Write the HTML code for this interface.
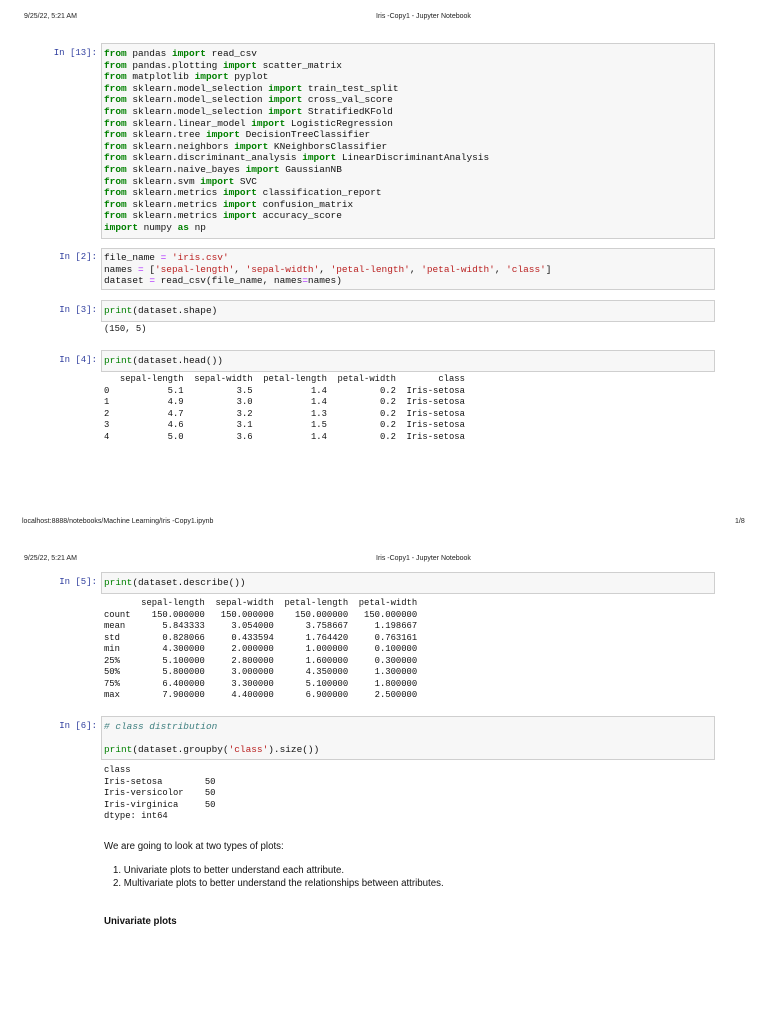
<!DOCTYPE html>
<html><head><meta charset="utf-8"><style>
body{margin:0;width:768px;height:1024px;background:#fff;position:relative;overflow:hidden;font-family:"Liberation Sans",sans-serif;}
.hd{position:absolute;font-size:7px;color:#222;}
.box{position:absolute;left:101px;width:614px;border:1px solid #cfcfcf;background:#f7f7f7;box-sizing:border-box;}
pre{position:absolute;left:104px;margin:0;font-family:"Liberation Mono",monospace;font-size:9.45px;line-height:11.6px;color:#111;}
pre.out{font-size:8.85px;line-height:11.55px;}
.p{position:absolute;right:671px;font-family:"Liberation Mono",monospace;font-size:9px;color:#303F9F;line-height:11.6px;}
.k{color:#008000;font-weight:bold}.s{color:#BA2121}.o{color:#AA22FF}.c{color:#408080;font-style:italic}.b{color:#008000}
.t{position:absolute;left:104px;font-size:9.7px;color:#111;}
</style></head><body>
<div class="hd" style="left:24px;top:13px">9/25/22, 5:21 AM</div>
<div class="hd" style="left:376px;top:13px">Iris -Copy1 - Jupyter Notebook</div>

<div class="box" style="top:43px;height:196px"></div>
<div class="p" style="top:48px">In [13]:</div>
<pre style="top:48px"><span class="k">from</span> pandas <span class="k">import</span> read_csv
<span class="k">from</span> pandas.plotting <span class="k">import</span> scatter_matrix
<span class="k">from</span> matplotlib <span class="k">import</span> pyplot
<span class="k">from</span> sklearn.model_selection <span class="k">import</span> train_test_split
<span class="k">from</span> sklearn.model_selection <span class="k">import</span> cross_val_score
<span class="k">from</span> sklearn.model_selection <span class="k">import</span> StratifiedKFold
<span class="k">from</span> sklearn.linear_model <span class="k">import</span> LogisticRegression
<span class="k">from</span> sklearn.tree <span class="k">import</span> DecisionTreeClassifier
<span class="k">from</span> sklearn.neighbors <span class="k">import</span> KNeighborsClassifier
<span class="k">from</span> sklearn.discriminant_analysis <span class="k">import</span> LinearDiscriminantAnalysis
<span class="k">from</span> sklearn.naive_bayes <span class="k">import</span> GaussianNB
<span class="k">from</span> sklearn.svm <span class="k">import</span> SVC
<span class="k">from</span> sklearn.metrics <span class="k">import</span> classification_report
<span class="k">from</span> sklearn.metrics <span class="k">import</span> confusion_matrix
<span class="k">from</span> sklearn.metrics <span class="k">import</span> accuracy_score
<span class="k">import</span> numpy <span class="k">as</span> np</pre>

<div class="box" style="top:248px;height:42px"></div>
<div class="p" style="top:252px">In [2]:</div>
<pre style="top:252px">file_name <span class="o">=</span> <span class="s">'iris.csv'</span>
names <span class="o">=</span> [<span class="s">'sepal-length'</span>, <span class="s">'sepal-width'</span>, <span class="s">'petal-length'</span>, <span class="s">'petal-width'</span>, <span class="s">'class'</span>]
dataset <span class="o">=</span> read_csv(file_name, names<span class="o">=</span>names)</pre>

<div class="box" style="top:300px;height:22px"></div>
<div class="p" style="top:305px">In [3]:</div>
<pre style="top:305px"><span class="b">print</span>(dataset.shape)</pre>
<pre class="out" style="top:324px">(150, 5)</pre>

<div class="box" style="top:350px;height:22px"></div>
<div class="p" style="top:355px">In [4]:</div>
<pre style="top:355px"><span class="b">print</span>(dataset.head())</pre>
<pre class="out" style="top:374px">   sepal-length  sepal-width  petal-length  petal-width        class
0           5.1          3.5           1.4          0.2  Iris-setosa
1           4.9          3.0           1.4          0.2  Iris-setosa
2           4.7          3.2           1.3          0.2  Iris-setosa
3           4.6          3.1           1.5          0.2  Iris-setosa
4           5.0          3.6           1.4          0.2  Iris-setosa</pre>

<div class="hd" style="left:22px;top:518px">localhost:8888/notebooks/Machine Learning/Iris -Copy1.ipynb</div>
<div class="hd" style="left:735px;top:518px">1/8</div>
<div class="hd" style="left:24px;top:555px">9/25/22, 5:21 AM</div>
<div class="hd" style="left:376px;top:555px">Iris -Copy1 - Jupyter Notebook</div>

<div class="box" style="top:572px;height:22px"></div>
<div class="p" style="top:577px">In [5]:</div>
<pre style="top:577px"><span class="b">print</span>(dataset.describe())</pre>
<pre class="out" style="top:598px">       sepal-length  sepal-width  petal-length  petal-width
count    150.000000   150.000000    150.000000   150.000000
mean       5.843333     3.054000      3.758667     1.198667
std        0.828066     0.433594      1.764420     0.763161
min        4.300000     2.000000      1.000000     0.100000
25%        5.100000     2.800000      1.600000     0.300000
50%        5.800000     3.000000      4.350000     1.300000
75%        6.400000     3.300000      5.100000     1.800000
max        7.900000     4.400000      6.900000     2.500000</pre>

<div class="box" style="top:716px;height:44px"></div>
<div class="p" style="top:721px">In [6]:</div>
<pre style="top:721px"><span class="c"># class distribution</span>

<span class="b">print</span>(dataset.groupby(<span class="s">'class'</span>).size())</pre>
<pre class="out" style="top:765px">class
Iris-setosa        50
Iris-versicolor    50
Iris-virginica     50
dtype: int64</pre>

<div class="t" style="top:841px">We are going to look at two types of plots:</div>
<div class="t" style="top:865px;left:113px">1. Univariate plots to better understand each attribute.</div>
<div class="t" style="top:878px;left:113px">2. Multivariate plots to better understand the relationships between attributes.</div>
<div class="t" style="top:916px;font-weight:bold">Univariate plots</div>
</body></html>
